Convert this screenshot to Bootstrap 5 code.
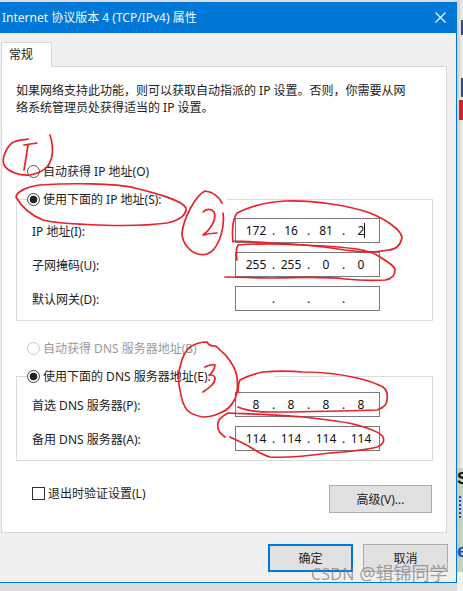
<!DOCTYPE html>
<html lang="zh">
<head>
<meta charset="utf-8">
<title>Internet 协议版本 4 (TCP/IPv4) 属性</title>
<link href="https://cdn.jsdelivr.net/npm/bootstrap@5.3.0/dist/css/bootstrap.min.css" rel="stylesheet">
<style>
html,body{margin:0;height:591px;overflow:hidden}
body{background:#dcdcdc;font:12px/17px "Noto Sans","Noto Sans CJK SC",sans-serif;color:#222}
.stage{position:relative;width:463px;height:591px;overflow:hidden}
.dlg{width:457px;height:581px;margin-top:2px;background:#f0f0f0;border-right:1px solid #0078d7;border-bottom:1px solid #0078d7;flex:none}
.ttl{height:31px;background:#0078d7;color:#f4f9fd;padding:0 10px 0 2px;flex:none}
.tabbar{padding:9px 0 0 1px;height:34px;flex:none}
.tabbar .nav-link{width:51px;height:25px;padding:3px 0 0 7px;margin:0;background:#fff;color:#222;border:1px solid #d9d9d9;border-bottom:0;border-radius:0;font-size:12px;line-height:17px;position:relative;z-index:1}
.pane{margin-left:1px;width:446px;height:467px;background:#fff;border:1px solid #d9d9d9;margin-top:-1px;padding:15px 0 0 14px;flex:none}
.para{margin:0;width:400px}
.opt{height:20px;min-height:0;margin:0;padding:0 0 0 11px}
.opt-first{margin-top:45px}
.opt-mid{margin-top:17px}
.opt-dim{color:#9a9a9a}
.opt .form-check-input,.gcap .form-check-input{float:none;width:13px;height:13px;margin:1px 3px 0 0;flex:none;background:#fff;border:1px solid #555;border-radius:50%;box-shadow:none}
.opt .form-check-input:checked,.gcap .form-check-input:checked{background:radial-gradient(circle,#222 0 3.5px,#fff 4.2px);border-color:#444}
.opt-dim .form-check-input{border-color:#ccc}
.gbox{width:417px;border:1px solid #dcdcdc;margin-top:18px;padding:0 0 9px 15px}
.gcap{height:20px;min-height:0;margin:-11px 0 9px -5px;background:#fff;padding-left:0;width:200px}
.gcap-wide{width:247px;margin-bottom:6px}
.frow{height:25px;margin-bottom:9px}
.frow:last-child{margin-bottom:0}
.flab{width:203px;flex:none;padding-top:2px}
.ipf{width:145px;height:25px;border:1px solid #7a7a7a;padding-left:5px;background:#fff;color:#111;flex:none}
.oct{width:30px;text-align:center;flex:none}
.dot{width:5px;text-align:center;flex:none}
.caret-bar{display:inline-block;width:1px;height:15px;background:#111;vertical-align:-3px;margin-right:-1px}
.bottomrow{width:416px;margin-top:24px;padding-left:16px}
.checkrow{margin:0;min-height:0;padding:0}
.checkrow .form-check-input{float:none;width:13px;height:13px;margin:2px 3px 0 0;background:#fff;border:1px solid #333;border-radius:0;flex:none}
.winbtn{background:#e1e1e1;border:1px solid #adadad;border-radius:0;color:#222;font-size:12px;line-height:17px;padding:0}
.btn-adv{width:103px;height:28px}
.foot{padding:11px 8px 0 0;gap:10px}
.btn-act{width:85px;height:28px}
.btn-def{border:2px solid #0078d7}
.side{width:6px;flex:none;height:591px;background:#e9e9e9;overflow:hidden}
.side-top{height:468px;background:linear-gradient(90deg,#cfcfcf,#efefef);padding-left:4px;padding-top:20px;flex:none}
.frag{width:2px}
.frag-a{height:15px;background:#2c4f86}
.frag-b{height:19px;margin-top:43px;background:#2c4f86}
.frag-c{height:20px;margin-top:3px;margin-left:-2px;width:4px;background:#d5222c}
.side-mid{height:104px;background:#c3d2bc;overflow:hidden;flex:none;padding-top:2px}
.gl-s{display:block;font:700 17px/17px "Liberation Sans",sans-serif;color:#111}
.gl-dots{width:3px;height:22px;margin:9px 0 0 2px;border-left:2px dotted #2340d8}
.gl-e{display:block;margin-top:24px;font:700 18px/18px "Liberation Sans",sans-serif;color:#1554c8}
.side-low{height:19px;background:#f3f3f3;flex:none}
.ink{position:absolute;left:0;top:0;pointer-events:none}
.ink path{fill:none;stroke:#e8212b;stroke-width:1.7;stroke-linecap:round;stroke-linejoin:round}
.mark-wm{position:absolute;left:311px;top:563px;font-size:18px;line-height:20px;color:rgba(125,125,125,.72);white-space:nowrap}
.mark-wm span{font-size:16px;letter-spacing:.2px}
</style>
</head>
<body>
<div class="stage d-flex">
  <div class="dlg d-flex flex-column">
    <div class="ttl d-flex align-items-center justify-content-between">
      <span>Internet 协议版本 4 (TCP/IPv4) 属性</span>
      <svg width="11" height="11" viewBox="0 0 11 11" aria-hidden="true"><path d="M.5.5l10 10M10.5.5l-10 10" stroke="#fff" stroke-width="1.1" fill="none"/></svg>
    </div>
    <ul class="nav tabbar"><li class="nav-item"><a class="nav-link active" href="#">常规</a></li></ul>
    <div class="pane">
      <p class="para">如果网络支持此功能，则可以获取自动指派的 IP 设置。否则，你需要从网络系统管理员处获得适当的 IP 设置。</p>
      <label class="opt opt-first form-check d-flex align-items-center"><input class="form-check-input" type="radio" name="a">自动获得 IP 地址(O)</label>
      <div class="gbox">
        <label class="gcap form-check d-flex align-items-center"><input class="form-check-input" type="radio" name="a" checked>使用下面的 IP 地址(S):</label>
        <div class="frow d-flex align-items-center"><span class="flab">IP 地址(I):</span><div class="ipf d-flex align-items-center"><span class="oct">172</span><span class="dot">.</span><span class="oct">16</span><span class="dot">.</span><span class="oct">81</span><span class="dot">.</span><span class="oct">2<i class="caret-bar"></i></span></div></div>
        <div class="frow d-flex align-items-center"><span class="flab">子网掩码(U):</span><div class="ipf d-flex align-items-center"><span class="oct">255</span><span class="dot">.</span><span class="oct">255</span><span class="dot">.</span><span class="oct">0</span><span class="dot">.</span><span class="oct">0</span></div></div>
        <div class="frow d-flex align-items-center"><span class="flab">默认网关(D):</span><div class="ipf d-flex align-items-center"><span class="oct"></span><span class="dot">.</span><span class="oct"></span><span class="dot">.</span><span class="oct"></span><span class="dot">.</span><span class="oct"></span></div></div>
      </div>
      <label class="opt opt-mid opt-dim form-check d-flex align-items-center"><input class="form-check-input" type="radio" name="b">自动获得 DNS 服务器地址(B)</label>
      <div class="gbox">
        <label class="gcap gcap-wide form-check d-flex align-items-center"><input class="form-check-input" type="radio" name="b" checked>使用下面的 DNS 服务器地址(E):</label>
        <div class="frow d-flex align-items-center"><span class="flab">首选 DNS 服务器(P):</span><div class="ipf d-flex align-items-center"><span class="oct">8</span><span class="dot">.</span><span class="oct">8</span><span class="dot">.</span><span class="oct">8</span><span class="dot">.</span><span class="oct">8</span></div></div>
        <div class="frow d-flex align-items-center"><span class="flab">备用 DNS 服务器(A):</span><div class="ipf d-flex align-items-center"><span class="oct">114</span><span class="dot">.</span><span class="oct">114</span><span class="dot">.</span><span class="oct">114</span><span class="dot">.</span><span class="oct">114</span></div></div>
      </div>
      <div class="bottomrow d-flex justify-content-between align-items-start">
        <label class="checkrow form-check d-flex"><input class="form-check-input" type="checkbox">退出时验证设置(L)</label>
        <button type="button" class="btn winbtn btn-adv">高级(V)...</button>
      </div>
    </div>
    <div class="foot d-flex justify-content-end">
      <button type="button" class="btn winbtn btn-act btn-def">确定</button>
      <button type="button" class="btn winbtn btn-act">取消</button>
    </div>
  </div>
  <div class="side d-flex flex-column">
    <div class="side-top"><div class="frag frag-a"></div><div class="frag frag-b"></div><div class="frag frag-c"></div></div>
    <div class="side-mid"><span class="gl-s">S</span><div class="gl-dots"></div><span class="gl-e">e</span></div>
    <div class="side-low"></div>
  </div>
  <svg class="ink" width="463" height="591" viewBox="0 0 463 591" aria-hidden="true">
    <path d="M50 135C54 148 54 158 47 167C42 172 36 174 30 175C20 176 8 172 4 165C1 157 8 146 12 143C18 139 26 140 28 139"/>
    <path d="M28 145L24 170M24 145L37 143"/>
    <path d="M16 197C17 192 25 187 40 185C70 183 115 183 135 188C155 193 182 200 186 208C187 215 178 221 167 223C145 226 125 226 100 225C80 224 58 224 43 220C33 216 22 208 16 197"/>
    <path d="M222 203C219 197 213 192 205 191C196 195 184 217 182 233C182 243 190 252 198 254C205 256 211 253 214 249C219 243 225 228 223 213"/>
    <path d="M203 212C206 209 211 208 214 212C217 219 211 229 203 235C208 234 212 233 217 233"/>
    <path d="M233 242C232 232 232 220 237 213C247 208 265 202 285 201C315 200 350 206 370 213C385 219 402 230 402 238C400 246 395 250 388 250C375 253 360 252 345 250C320 246 295 244 270 243C255 242 243 241 233 241"/>
    <path d="M237 260C236 254 236 248 238 245C260 243 285 244 303 245C325 246 342 247 357 249C368 251 376 254 380 257C388 262 395 266 395 270C395 276 392 279 385 280C370 281 355 280 345 279C320 276 295 278 270 278C255 278 240 277 225 277"/>
    <path d="M180 390C178 382 178 375 180 367C182 358 186 350 190 347C196 343 202 342 207 342C209 346 212 346 214 346C216 345 218 348 220 350C223 353 226 355 227 357C232 363 236 371 237 377C238 385 238 392 235 399C232 405 226 411 220 413C214 416 208 417 203 417C197 416 191 414 187 410C183 405 181 397 180 390"/>
    <path d="M205 367C209 365 213 364 215 365C215 369 212 372 210 375C212 375 215 376 215 378C215 382 213 384 212 385C209 388 206 390 203 392"/>
    <path d="M238 407C245 410 255 412 270 412C300 412 340 411 377 410C383 408 387 405 387 400C388 394 387 390 383 387C375 383 366 380 357 378C340 374 320 372 303 372C290 371 275 371 263 372C253 374 246 377 240 380C238 384 238 388 238 392"/>
    <path d="M225 437C221 434 218 431 218 428C217 423 219 419 222 417C224 415 226 414 228 413C250 414 280 415 303 417C322 419 342 421 357 425C368 428 380 432 383 437C385 442 382 445 377 447C362 451 345 452 330 453C315 455 285 458 270 457C262 455 256 451 250 447C244 443 236 440 230 437"/>
  </svg>
  <div class="mark-wm"><span>CSDN</span> @辑锦同学</div>
</div>
<script src="https://cdn.jsdelivr.net/npm/bootstrap@5.3.0/dist/js/bootstrap.bundle.min.js"></script>
</body>
</html>
